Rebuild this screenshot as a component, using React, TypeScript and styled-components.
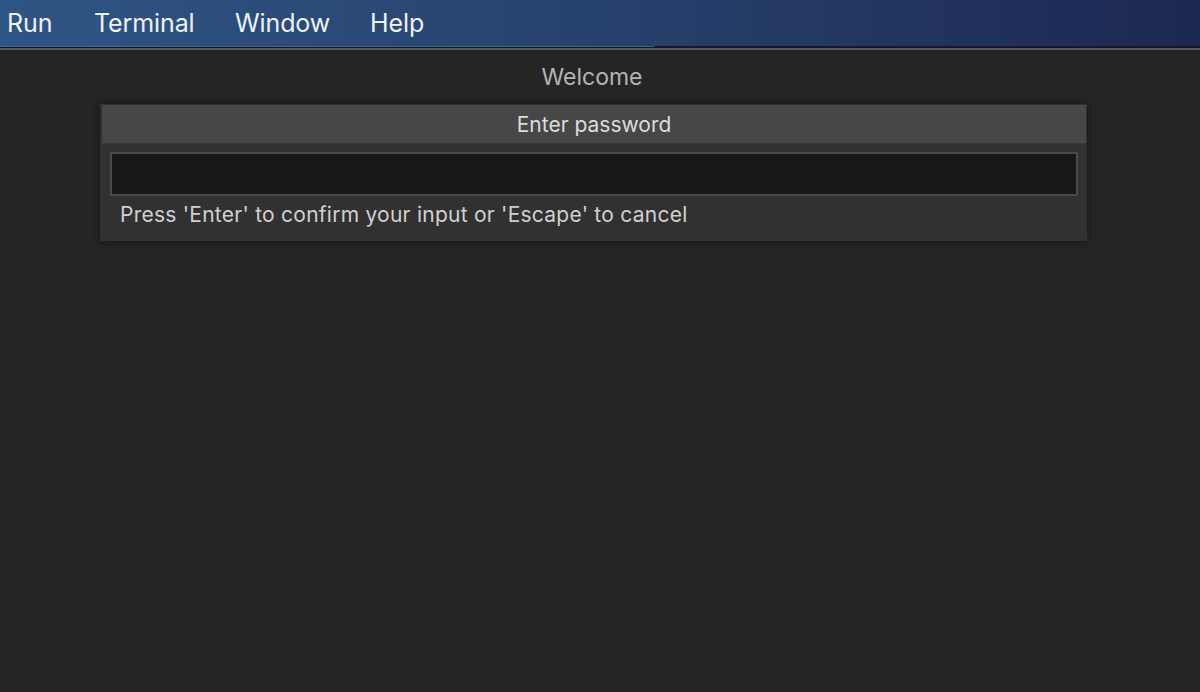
import React from "react";
import styled, { createGlobalStyle } from "styled-components";

const Global = createGlobalStyle`
  html, body { margin: 0; padding: 0; background: #252525; }
  body { width: 1200px; height: 692px; overflow: hidden; font-family: Inter, "Liberation Sans", Arial, sans-serif; }
  #root { height: 100%; }
`;

const Page = styled.div`
  width: 1200px;
  height: 692px;
  display: flex;
  flex-direction: column;
  background: #252525;
`;

const MenuBar = styled.div`
  height: 46px;
  display: flex;
  align-items: center;
  padding-left: 7px;
  background: linear-gradient(90deg, #2f5585 0%, #27416d 50%, #1c2852 100%);
  box-sizing: border-box;
`;

const MenuItem = styled.span<{ $w: number }>`
  width: ${(p) => p.$w}px;
  flex: none;
  color: #eef2f7;
  font-size: 25px;
  letter-spacing: -0.1px;
  line-height: 46px;
`;

const Seam = styled.div`
  height: 4px;
  display: flex;
  flex-direction: column;
`;

const SeamHighlight = styled.div`
  height: 1px;
  background: linear-gradient(90deg, #3d6699 0%, #3a6293 54.5%, #151a2e 54.6%, #151a2e 100%);
`;

const SeamDark = styled.div`
  height: 1px;
  background: #161616;
`;

const SeamGray = styled.div`
  height: 2px;
  background: #5a5a5a;
`;

const Workspace = styled.div`
  flex: 1;
  display: flex;
  flex-direction: column;
  align-items: center;
`;

const Title = styled.div`
  height: 54px;
  line-height: 54px;
  color: #b4b4b4;
  font-size: 23px;
  margin-left: -16px;
`;

const Dialog = styled.div`
  width: 987px;
  margin-left: -13px;
  box-sizing: border-box;
  background: #313131;
  padding: 1px 1px 0 2px;
  box-shadow: 0 0 8px rgba(0, 0, 0, 0.45);
  display: flex;
  flex-direction: column;
`;

const Header = styled.div`
  height: 38px;
  background: #474747;
  color: #dcdcdc;
  font-size: 21px;
  display: flex;
  align-items: center;
  justify-content: center;
  border-bottom: 1px solid #3a3a3a;
`;

const Body = styled.div`
  padding: 8px 8px 0 8px;
  display: flex;
  flex-direction: column;
`;

const Input = styled.input`
  height: 44px;
  box-sizing: border-box;
  background: #181818;
  border: 2px solid #4a4a4a;
  outline: none;
  color: #ddd;
  font-size: 18px;
  padding: 0 8px;
`;

const Hint = styled.div`
  height: 45px;
  padding-left: 10px;
  color: #d0d0d0;
  font-size: 21px;
  letter-spacing: 0.25px;
  line-height: 38px;
`;

export default function App() {
  return (
    <Page>
      <Global />
      <MenuBar>
        <MenuItem $w={87}>Run</MenuItem>
        <MenuItem $w={141}>Terminal</MenuItem>
        <MenuItem $w={135}>Window</MenuItem>
        <MenuItem $w={80}>Help</MenuItem>
      </MenuBar>
      <Seam>
        <SeamHighlight />
        <SeamDark />
        <SeamGray />
      </Seam>
      <Workspace>
        <Title>Welcome</Title>
        <Dialog>
          <Header>Enter password</Header>
          <Body>
            <Input type="password" />
            <Hint>Press 'Enter' to confirm your input or 'Escape' to cancel</Hint>
          </Body>
        </Dialog>
      </Workspace>
    </Page>
  );
}
